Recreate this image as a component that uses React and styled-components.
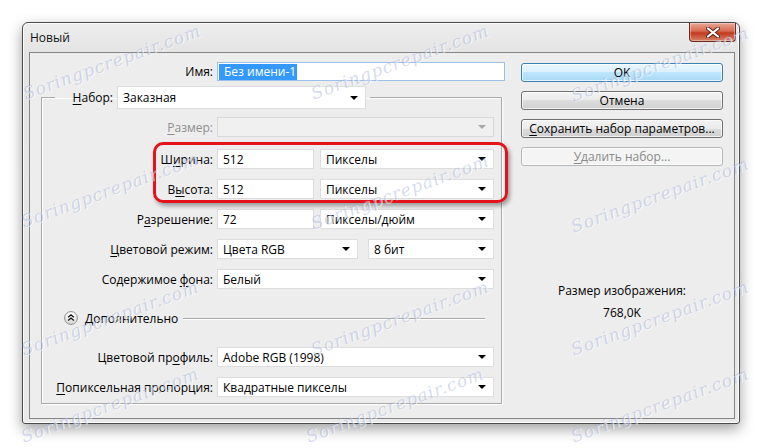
import React from 'react'
import styled, { createGlobalStyle } from 'styled-components'

const GlobalStyle = createGlobalStyle`
  html, body {
    margin: 0;
    padding: 0;
    background: #fff;
  }
  body {
    font-family: "Open Sans", "Noto Sans", sans-serif;
    font-size: 12px;
    color: #000;
  }
`

const Page = styled.div`
  position: relative;
  width: 765px;
  height: 448px;
  padding: 22px 25px 24px 22px;
  box-sizing: border-box;
  overflow: hidden;
  background: #fff;
`

const Window = styled.div`
  width: 718px;
  height: 402px;
  box-sizing: border-box;
  border: 1px solid #4a4a4a;
  border-radius: 6px 6px 3px 3px;
  background: linear-gradient(#ededed, #e4e4e4 30px, #e9e9e9);
  box-shadow: 0 5px 14px rgba(0, 0, 0, 0.38), inset 0 0 0 1px rgba(255, 255, 255, 0.85);
  display: flex;
  flex-direction: column;
`

const TitleBar = styled.div`
  height: 29px;
  display: flex;
  align-items: flex-start;
  padding-left: 7px;
  flex-shrink: 0;
`

const Title = styled.span`
  margin-top: 7px;
  line-height: 16px;
  color: #111;
`

const CloseButton = styled.div`
  margin-left: auto;
  margin-right: 3px;
  width: 47px;
  height: 19px;
  box-sizing: border-box;
  border: 1px solid #6d2a1c;
  border-top: none;
  border-radius: 0 0 4px 4px;
  background: linear-gradient(#e9a895, #d76a4f 45%, #c2391c 55%, #d5826a);
  box-shadow: inset 0 0 0 1px rgba(255, 255, 255, 0.35);
  display: flex;
  align-items: center;
  justify-content: center;
`

const Client = styled.div`
  flex: 1;
  margin: 0 4px 4px 6px;
  border: 1px solid #858585;
  background: #ededed;
  display: flex;
`

const LeftCol = styled.div`
  padding: 9px 0 0 11px;
  width: 461px;
  flex-shrink: 0;
`

const Row = styled.div`
  display: flex;
  align-items: center;
  gap: ${p => p.$gap ?? 4}px;
  margin-top: ${p => p.$mt || 0}px;
`

const Label = styled.span`
  width: ${p => p.$w}px;
  flex-shrink: 0;
  text-align: right;
  white-space: nowrap;
  color: ${p => (p.$disabled ? '#8f8f8f' : '#000')};

  u {
    text-decoration: underline;
    text-underline-offset: 2px;
  }
`

const Field = styled.div`
  width: ${p => p.$w}px;
  height: ${p => p.$h || 20}px;
  box-sizing: border-box;
  flex-shrink: 0;
  margin-left: ${p => p.$ml || 0}px;
  border: 1px solid ${p => (p.$focused ? '#9cc0e6' : p.$disabled ? '#d8d8d8' : '#dddddd')};
  background: ${p => (p.$disabled ? '#f0f0f0' : '#fff')};
  display: flex;
  align-items: center;
  padding: 0 7px 0 ${p => (p.$focused ? 1 : 5)}px;
  white-space: nowrap;
`

const Selection = styled.span`
  background: #3399ff;
  color: #fff;
  padding: 0 1px 0 5px;
  line-height: 16px;
`

const Arrow = styled.span`
  margin-left: auto;
  width: 0;
  height: 0;
  border-left: 4px solid transparent;
  border-right: 4px solid transparent;
  border-top: 4px solid ${p => (p.$disabled ? '#a8a8a8' : '#000')};
`

const Fieldset = styled.fieldset`
  margin: 5px 0 0 0;
  padding: 0 0 6px 0;
  border: 1px solid #a9a9a9;
  box-shadow: 1px 1px 0 #fff, inset 1px 1px 0 #fff;
  min-width: 0;
  width: 461px;
  box-sizing: border-box;
`

const Legend = styled.legend`
  margin-left: 13px;
  padding: 0 4px;
`

const AdvancedRow = styled.div`
  display: flex;
  align-items: center;
  margin-top: 21px;
  padding: 0 16px 0 22px;
  height: 16px;
`

const AdvancedText = styled.span`
  margin-left: 7px;
  white-space: nowrap;
`

const Divider = styled.div`
  flex: 1;
  height: 1px;
  margin-left: 5px;
  background: #a9a9a9;
  box-shadow: 0 1px 0 #fff;
`

const RightCol = styled.div`
  margin-left: 19px;
  width: 202px;
  padding-top: 10px;
  display: flex;
  flex-direction: column;
`

const Button = styled.div`
  height: 19px;
  box-sizing: border-box;
  margin-bottom: 9px;
  border: 1px solid ${p => (p.$primary ? '#3c7fb1' : p.$disabled ? '#b5b8ba' : '#707070')};
  border-radius: 3px;
  background: ${p =>
    p.$primary
      ? 'linear-gradient(#eaf6fd, #d9f0fc 50%, #bee6fd 50%, #a7d9f5)'
      : p.$disabled
      ? '#f4f4f4'
      : 'linear-gradient(#f2f2f2, #ebebeb 50%, #dddddd 50%, #cfcfcf)'};
  box-shadow: inset 0 0 0 1px rgba(255, 255, 255, 0.7);
  color: ${p => (p.$disabled ? '#8a8a8a' : '#000')};
  display: flex;
  align-items: center;
  justify-content: center;
  line-height: 16px;
  white-space: nowrap;

  u {
    text-underline-offset: 2px;
  }
`

const Info = styled.div`
  text-align: center;
  line-height: 16px;
  margin-top: ${p => p.$mt}px;
`

const Highlight = styled.div`
  position: absolute;
  left: 153px;
  top: 142px;
  width: 355px;
  height: 61px;
  box-sizing: border-box;
  border: 3px solid #e3121b;
  border-radius: 10px;
  box-shadow: 2px 3px 4px rgba(0, 0, 0, 0.35);
  pointer-events: none;
`

const Watermark = styled.div`
  position: absolute;
  left: ${p => p.$x}px;
  top: ${p => p.$y}px;
  transform: translate(-50%, -50%) rotate(-20deg);
  font-family: "DejaVu Serif", serif;
  font-style: italic;
  font-size: 17px;
  letter-spacing: 1px;
  color: rgba(150, 166, 212, 0.4);
  text-shadow: 1px 1px 0 rgba(255, 255, 255, 0.6);
  white-space: nowrap;
  pointer-events: none;
`

const CloseIcon = () => (
  <svg width="14" height="11" viewBox="0 0 14 11">
    <path d="M2 1.5 L12 9.5 M12 1.5 L2 9.5" stroke="#5a2015" strokeWidth="4" strokeLinecap="round" />
    <path d="M2 1.5 L12 9.5 M12 1.5 L2 9.5" stroke="#fff" strokeWidth="2.2" strokeLinecap="round" />
  </svg>
)

const ExpandIcon = () => (
  <svg width="14" height="14" viewBox="0 0 14 14">
    <defs>
      <linearGradient id="eg" x1="0" y1="0" x2="0" y2="1">
        <stop offset="0" stopColor="#ffffff" />
        <stop offset="1" stopColor="#d8d8d8" />
      </linearGradient>
    </defs>
    <circle cx="7" cy="7" r="6.4" fill="url(#eg)" stroke="#8c8c8c" strokeWidth="1" />
    <path d="M4.2 6.3 L7 3.8 L9.8 6.3 M4.2 9.5 L7 7 L9.8 9.5" fill="none" stroke="#111" strokeWidth="1.3" />
  </svg>
)

const SelectBox = ({ w, h, ml, disabled, children }) => (
  <Field $w={w} $h={h} $ml={ml} $disabled={disabled}>
    {children}
    <Arrow $disabled={disabled} />
  </Field>
)

const watermarks = [
  [112, 62], [400, 62], [660, 64],
  [110, 190], [400, 192], [660, 195],
  [110, 318], [400, 318], [660, 318],
  [110, 405], [395, 405], [660, 405],
]

const App = () => {
  return (
    <Page>
      <GlobalStyle />
      <Window>
        <TitleBar>
          <Title>Новый</Title>
          <CloseButton><CloseIcon /></CloseButton>
        </TitleBar>
        <Client>
          <LeftCol>
            <Row>
              <Label $w={172}>Имя:</Label>
              <Field $w={288} $h={19} $focused>
                <Selection>Без имени-1</Selection>
              </Field>
            </Row>
            <Fieldset>
              <Legend>
                <Row>
                  <Label $w={54}><u>Н</u>абор:</Label>
                  <SelectBox w={249} h={23}>Заказная</SelectBox>
                </Row>
              </Legend>
              <Row $mt={8}>
                <Label $w={171} $disabled><u>Р</u>азмер:</Label>
                <SelectBox w={277} disabled />
              </Row>
              <Row $mt={12}>
                <Label $w={171}>Ш<u>и</u>рина:</Label>
                <Field $w={97}>512</Field>
                <SelectBox w={174} ml={2}>Пикселы</SelectBox>
              </Row>
              <Row $mt={10}>
                <Label $w={171}>В<u>ы</u>сота:</Label>
                <Field $w={97}>512</Field>
                <SelectBox w={174} ml={2}>Пикселы</SelectBox>
              </Row>
              <Row $mt={10}>
                <Label $w={171}>Р<u>а</u>зрешение:</Label>
                <Field $w={97}>72</Field>
                <SelectBox w={174} ml={2}>Пикселы/дюйм</SelectBox>
              </Row>
              <Row $mt={10}>
                <Label $w={171}><u>Ц</u>ветовой режим:</Label>
                <SelectBox w={141}>Цвета RGB</SelectBox>
                <SelectBox w={126} ml={6}>8 бит</SelectBox>
              </Row>
              <Row $mt={10}>
                <Label $w={171}>Содержимое <u>ф</u>она:</Label>
                <SelectBox w={277}>Белый</SelectBox>
              </Row>
              <AdvancedRow>
                <ExpandIcon />
                <AdvancedText>Дополнительно</AdvancedText>
                <Divider />
              </AdvancedRow>
              <Row $mt={21}>
                <Label $w={171}>Цветовой пр<u>о</u>филь:</Label>
                <SelectBox w={277}>Adobe RGB (1998)</SelectBox>
              </Row>
              <Row $mt={10}>
                <Label $w={171}><u>П</u>опиксельная пропорция:</Label>
                <SelectBox w={277}>Квадратные пикселы</SelectBox>
              </Row>
            </Fieldset>
          </LeftCol>
          <RightCol>
            <Button $primary>OK</Button>
            <Button>Отмена</Button>
            <Button><span><u>С</u>охранить набор параметров...</span></Button>
            <Button $disabled><span><u>У</u>далить набор...</span></Button>
            <Info $mt={108}>Размер изображения:</Info>
            <Info $mt={6}>768,0K</Info>
          </RightCol>
        </Client>
      </Window>
      <Highlight />
      {watermarks.map(([x, y], i) => (
        <Watermark key={i} $x={x} $y={y}>Soringpcrepair.com</Watermark>
      ))}
    </Page>
  )
}

export default App
